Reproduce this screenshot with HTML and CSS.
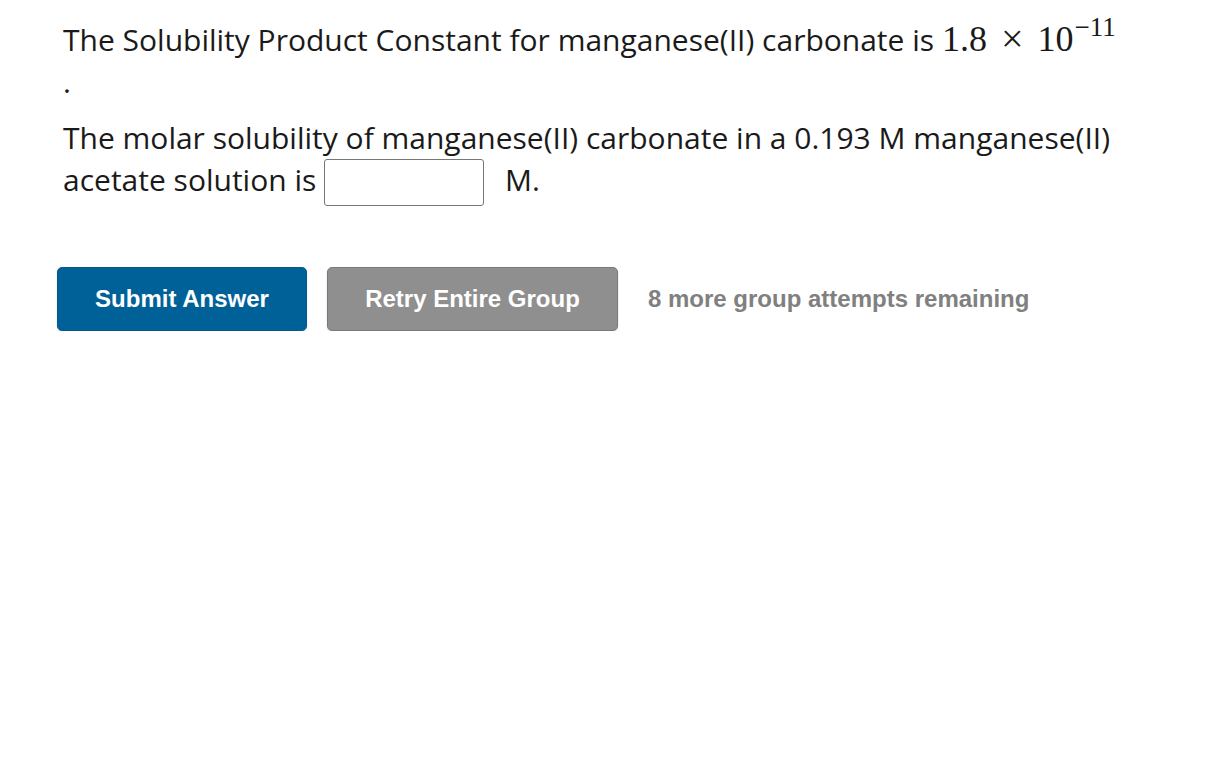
FILE: index.html
```html
<!DOCTYPE html>
<html>
<head>
<meta charset="utf-8">
<link rel="stylesheet" href="styles.css">
</head>
<body>
<div class="page">
  <div class="question">
    <p class="para">The Solubility Product Constant for manganese(II) carbonate is <span class="math">1.8<span class="op">×</span>10<sup class="exp">−11</sup></span><br>.</p>
    <p class="para para2">The molar solubility of manganese(II) carbonate in a 0.193 M manganese(II) acetate solution is <input class="answer" type="text"><span class="unit">M.</span></p>
  </div>
  <div class="actions">
    <button class="btn btn-submit">Submit Answer</button>
    <button class="btn btn-retry">Retry Entire Group</button>
    <span class="remaining">8 more group attempts remaining</span>
  </div>
</div>
</body>
</html>
```

FILE: styles.css
```css
html, body {
  margin: 0;
  padding: 0;
  background: #ffffff;
}
.page {
  padding: 18px 0 0 57px;
  width: 1100px;
}
.question {
  padding-left: 6px;
  font-family: "Open Sans", sans-serif;
  font-size: 30px;
  line-height: 42px;
  color: #1a1a1a;
}
.para {
  margin: 0;
  width: 1080px;
}
.para2 {
  margin-top: 14px;
}
.math {
  font-family: "Liberation Serif", "DejaVu Serif", serif;
  font-size: 36px;
}
.op {
  font-size: 40px;
  line-height: 0;
  padding: 0 14px;
  vertical-align: -1px;
}
.exp {
  font-size: 27px;
  vertical-align: 15px;
  line-height: 0;
  margin-left: 1px;
}
.answer {
  width: 160px;
  height: 47px;
  box-sizing: border-box;
  border: 1px solid #777777;
  border-radius: 3px;
  vertical-align: top;
  margin: 0;
  padding: 0;
}
.unit {
  margin-left: 21px;
}
.actions {
  display: flex;
  align-items: center;
  gap: 20px;
  margin-top: 61px;
}
.btn {
  height: 64px;
  border-radius: 5px;
  font-family: "Liberation Sans", Arial, sans-serif;
  font-weight: bold;
  font-size: 24px;
  color: #ffffff;
  cursor: pointer;
  padding: 0;
}
.btn-submit {
  width: 250px;
  background: #006198;
  border: 1px solid #005a8e;
  box-shadow: 0 1px 2px rgba(0,0,0,0.15);
}
.btn-retry {
  width: 291px;
  background: #8f8f8f;
  border: 1px solid #7a7a7a;
  box-shadow: 0 1px 2px rgba(0,0,0,0.15);
}
.remaining {
  margin-left: 10px;
  font-family: "Liberation Sans", Arial, sans-serif;
  font-weight: bold;
  font-size: 24px;
  color: #808080;
}
```
